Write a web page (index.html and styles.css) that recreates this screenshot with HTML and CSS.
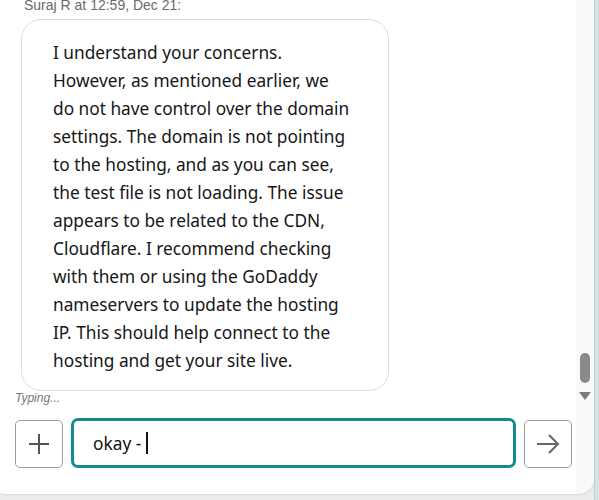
FILE: index.html
```html
<!DOCTYPE html>
<html>
<head>
<meta charset="utf-8">
<link rel="stylesheet" href="styles.css">
</head>
<body>
<div class="window">
  <div class="main">
    <div class="messages">
      <div class="meta">Suraj R at 12:59, Dec 21:</div>
      <div class="bubble">I understand your concerns.<br>However, as mentioned earlier, we<br>do not have control over the domain<br>settings. The domain is not pointing<br>to the hosting, and as you can see,<br>the test file is not loading. The issue<br>appears to be related to the CDN,<br>Cloudflare. I recommend checking<br>with them or using the GoDaddy<br>nameservers to update the hosting<br>IP. This should help connect to the<br>hosting and get your site live.</div>
    </div>
    <div class="typing">Typing...</div>
    <div class="composer">
      <button class="btn" aria-label="Add">
        <svg width="22" height="22" viewBox="0 0 22 22"><path d="M11 1v20M1 11h20" stroke="#555" stroke-width="2" fill="none"/></svg>
      </button>
      <div class="input"><span>okay - </span><span class="caret"></span></div>
      <button class="btn" aria-label="Send">
        <svg width="24" height="20" viewBox="0 0 24 20"><path d="M1 10h21M13 1l9 9-9 9" stroke="#666" stroke-width="2" fill="none"/></svg>
      </button>
    </div>
  </div>
  <div class="scrollbar">
    <div class="thumb"></div>
    <div class="arrow"></div>
  </div>
</div>
<div class="edge"></div>
</body>
</html>
```
FILE: styles.css
```css
html, body {
  margin: 0;
  padding: 0;
  height: 500px;
  overflow: hidden;
}
body {
  display: flex;
  align-items: flex-start;
  background: #ececec;
  font-family: "Noto Sans", "Liberation Sans", sans-serif;
}
.window {
  width: 594px;
  height: 494px;
  background: #fff;
  border-bottom-right-radius: 16px;
  border-bottom-left-radius: 4px;
  display: flex;
  overflow: hidden;
  box-shadow: 1px 1px 2px rgba(0,0,0,0.08);
}
.main {
  width: 576px;
  display: flex;
  flex-direction: column;
}
.messages {
  height: 391px;
  overflow: hidden;
  padding-left: 21px;
}
.meta {
  margin-top: -3px;
  margin-left: 3px;
  font-family: "Liberation Sans", Arial, sans-serif;
  font-size: 14px;
  line-height: 16px;
  color: #6a6a6a;
  height: 6px;
  overflow: visible;
}
.bubble {
  box-sizing: border-box;
  margin-top: 16px;
  width: 368px;
  height: 372px;
  border: 1px solid #dcdcdc;
  border-radius: 20px;
  padding: 19px 10px 0 31px;
  font-size: 17.3px;
  line-height: 28px;
  color: #161616;
  white-space: nowrap;
}
.typing {
  padding-left: 15px;
  font-family: "Liberation Sans", Arial, sans-serif;
  font-style: italic;
  font-size: 12px;
  line-height: 14px;
  color: #777;
  height: 14px;
}
.composer {
  display: flex;
  align-items: flex-end;
  gap: 8px;
  padding: 13px 0 0 15px;
}
.btn {
  box-sizing: border-box;
  width: 48px;
  height: 48px;
  border: 1px solid #9a9a9a;
  border-radius: 5px;
  background: #fff;
  display: flex;
  align-items: center;
  justify-content: center;
  padding: 0;
}
.input {
  box-sizing: border-box;
  width: 445px;
  height: 50px;
  border: 3px solid #168b8b;
  border-radius: 7px;
  padding-left: 19px;
  display: flex;
  align-items: center;
  font-size: 17.3px;
  color: #111;
  white-space: pre;
}
.caret {
  width: 2px;
  height: 22px;
  background: #111;
}
.scrollbar {
  width: 18px;
  background: #f9f9f9;
  display: flex;
  flex-direction: column;
  align-items: center;
  padding-top: 353px;
  box-sizing: border-box;
}
.thumb {
  width: 10px;
  height: 30px;
  border-radius: 5px;
  background: #8a8a8a;
}
.arrow {
  margin-top: 9px;
  width: 0;
  height: 0;
  border-left: 6px solid transparent;
  border-right: 6px solid transparent;
  border-top: 8px solid #7a7a7a;
}
.edge {
  width: 5px;
  height: 500px;
  background: #d3e4e4;
  border-left: 1px solid #bcd0d0;
  box-sizing: border-box;
}
```
